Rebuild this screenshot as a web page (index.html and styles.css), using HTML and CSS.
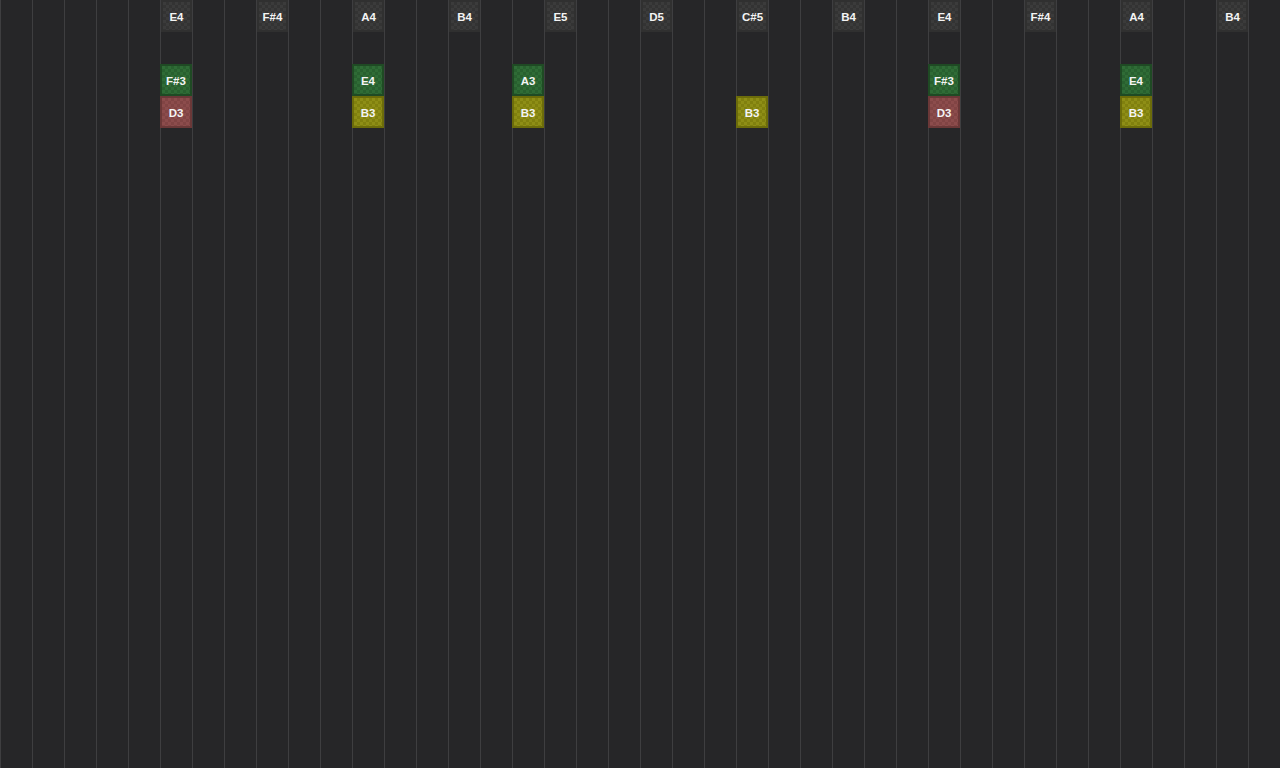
FILE: index.html
```html
<!DOCTYPE html>
<html lang="en">
<head>
  <meta charset="UTF-8" />
  <title>Chord Roll</title>
  <link rel="stylesheet" href="styles.css">
</head>
<body>
  <div class="roll">
    <div class="note melody" style="grid-area: 1 / 6">E4</div>
    <div class="note melody" style="grid-area: 1 / 9">F#4</div>
    <div class="note melody" style="grid-area: 1 / 12">A4</div>
    <div class="note melody" style="grid-area: 1 / 15">B4</div>
    <div class="note melody" style="grid-area: 1 / 18">E5</div>
    <div class="note melody" style="grid-area: 1 / 21">D5</div>
    <div class="note melody" style="grid-area: 1 / 24">C#5</div>
    <div class="note melody" style="grid-area: 1 / 27">B4</div>
    <div class="note melody" style="grid-area: 1 / 30">E4</div>
    <div class="note melody" style="grid-area: 1 / 33">F#4</div>
    <div class="note melody" style="grid-area: 1 / 36">A4</div>
    <div class="note melody" style="grid-area: 1 / 39">B4</div>

    <div class="note green" style="grid-area: 3 / 6">F#3</div>
    <div class="note green" style="grid-area: 3 / 12">E4</div>
    <div class="note green" style="grid-area: 3 / 17">A3</div>
    <div class="note green" style="grid-area: 3 / 30">F#3</div>
    <div class="note green" style="grid-area: 3 / 36">E4</div>

    <div class="note red" style="grid-area: 4 / 6">D3</div>
    <div class="note yellow" style="grid-area: 4 / 12">B3</div>
    <div class="note yellow" style="grid-area: 4 / 17">B3</div>
    <div class="note yellow" style="grid-area: 4 / 24">B3</div>
    <div class="note red" style="grid-area: 4 / 30">D3</div>
    <div class="note yellow" style="grid-area: 4 / 36">B3</div>
  </div>
</body>
</html>
```

FILE: styles.css
```css
html, body {
  margin: 0;
  height: 100%;
  background-color: #262628;
}
.roll {
  height: 768px;
  display: grid;
  grid-template-columns: repeat(40, 32px);
  grid-auto-rows: 32px;
  background-image: linear-gradient(to right, #3e3e40 1px, transparent 1px);
  background-size: 32px 100%;
  font-family: "Liberation Sans", Arial, sans-serif;
}
.note {
  box-sizing: border-box;
  width: 32px;
  height: 32px;
  padding-top: 2px;
  border: 2px solid;
  color: #f4f4f4;
  font-size: 11.5px;
  font-weight: bold;
  display: flex;
  align-items: center;
  justify-content: center;
  background-size: 6px 6px;
}
.melody {
  margin-left: 1px;
  width: 31px;
  background-color: #3b3b3b;
  border-color: #303030;
  background-image: conic-gradient(#333333 25%, transparent 0 50%, #333333 0 75%, transparent 0);
}
.green {
  background-color: #2f6c36;
  border-color: #1f4a24;
  background-image: conic-gradient(#28602f 25%, transparent 0 50%, #28602f 0 75%, transparent 0);
}
.red {
  background-color: #8c4c4c;
  border-color: #6b3838;
  background-image: conic-gradient(#814444 25%, transparent 0 50%, #814444 0 75%, transparent 0);
}
.yellow {
  background-color: #8e8e16;
  border-color: #6c6c0a;
  background-image: conic-gradient(#80800e 25%, transparent 0 50%, #80800e 0 75%, transparent 0);
}
```
